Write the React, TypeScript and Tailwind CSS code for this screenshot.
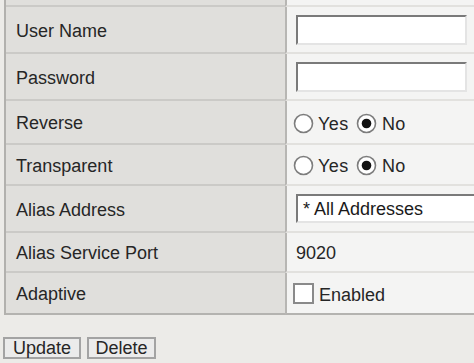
import React from "react";

const font = { fontFamily: '"Liberation Sans", Arial, sans-serif' };

function Radio({ checked }: { checked?: boolean }) {
  return (
    <svg width="21" height="21" viewBox="0 0 21 21" className="shrink-0">
      <circle cx="10.5" cy="10.5" r="9" fill="#ffffff" stroke="#7d7d7d" strokeWidth="1.6" />
      {checked && <circle cx="10.5" cy="10.5" r="4.8" fill="#111111" />}
    </svg>
  );
}

function Row({
  label,
  h,
  children,
  last,
}: {
  label: string;
  h: string;
  children?: React.ReactNode;
  last?: boolean;
}) {
  return (
    <div className={`flex ${h}`}>
      <div
        className={`w-[279px] shrink-0 bg-[#e0dfdc] flex items-center pl-[10px] pt-[3px] text-[18px] text-[#262626] border-b-2 ${
          last ? "border-[#b4b3b0]" : "border-[#cbcac7]"
        }`}
      >
        {label}
      </div>
      <div
        className={`flex-1 bg-[#f4f4f3] border-l-2 border-l-[#b7b6b3] flex items-center pl-[9px] text-[18px] text-[#262626] border-b-2 ${
          last ? "border-b-[#b4b3b0]" : "border-b-[#e2e1de]"
        }`}
      >
        {children}
      </div>
    </div>
  );
}

function TextBox({ w, h, value }: { w: string; h: string; value?: string }) {
  return (
    <div
      className={`${w} ${h} bg-white border-2 border-t-[#7a7a7a] border-l-[#7a7a7a] border-b-[#e4e4e4] border-r-[#e4e4e4] flex items-center pl-[5px] pt-[1px] text-[18px] text-[#1a1a1a] whitespace-nowrap overflow-hidden`}
    >
      {value}
    </div>
  );
}

function YesNo() {
  return (
    <div className="flex items-center -ml-[3px] pt-[2px]">
      <Radio />
      <span className="ml-[4px] mt-[2px] tracking-[0.5px]">Yes</span>
      <span className="ml-[7px]" />
      <Radio checked />
      <span className="ml-[5px] mt-[2px] tracking-[0.5px]">No</span>
    </div>
  );
}

export default function App() {
  return (
    <div className="w-[474px] h-[363px] bg-[#ecebe8] overflow-hidden" style={font}>
      <div className="ml-[4px] border-l-2 border-[#b2b1ae]">
        <Row label="" h="h-[7px]" />
        <Row label="User Name" h="h-[47px]">
          <TextBox w="w-[171px]" h="h-[30px]" />
        </Row>
        <Row label="Password" h="h-[47px]">
          <TextBox w="w-[171px]" h="h-[30px]" />
        </Row>
        <Row label="Reverse" h="h-[44px]">
          <YesNo />
        </Row>
        <Row label="Transparent" h="h-[41px]">
          <YesNo />
        </Row>
        <Row label="Alias Address" h="h-[47px]">
          <TextBox w="w-[200px]" h="h-[29px]" value="* All Addresses" />
        </Row>
        <Row label="Alias Service Port" h="h-[40px]">
          <span className="pt-[2px]">9020</span>
        </Row>
        <Row label="Adaptive" h="h-[42px]" last>
          <div className="flex items-center -ml-[3px]">
            <div className="w-[21px] h-[21px] bg-white border-2 border-[#8a8a8a]" />
            <span className="ml-[5px] mt-[5px]">Enabled</span>
          </div>
        </Row>
      </div>
      <div className="flex gap-[6px] ml-[3px] mt-[22px]">
        <button className="w-[78px] h-[22px] bg-[#ebebeb] border-2 border-[#a3a3a3] text-[18px] text-[#262626] leading-none flex items-center justify-center">
          Update
        </button>
        <button className="w-[69px] h-[22px] bg-[#ebebeb] border-2 border-[#a3a3a3] text-[18px] text-[#262626] leading-none flex items-center justify-center">
          Delete
        </button>
      </div>
    </div>
  );
}
